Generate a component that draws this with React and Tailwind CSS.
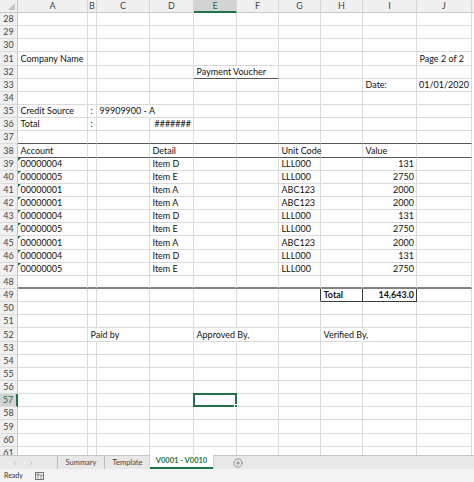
import { ChevronLeft, ChevronRight, CirclePlus } from "lucide-react";

// Sheet layout ---------------------------------------------------------

const COLS = ["A", "B", "C", "D", "E", "F", "G", "H", "I", "J"];
const ROWS = Array.from({ length: 34 }, (_, i) => 28 + i);

const items = [
  ["00000004", "Item D", "LLL000", "131"],
  ["00000005", "Item E", "LLL000", "2750"],
  ["00000001", "Item A", "ABC123", "2000"],
  ["00000001", "Item A", "ABC123", "2000"],
  ["00000004", "Item D", "LLL000", "131"],
  ["00000005", "Item E", "LLL000", "2750"],
  ["00000001", "Item A", "ABC123", "2000"],
  ["00000004", "Item D", "LLL000", "131"],
  ["00000005", "Item E", "LLL000", "2750"],
];

const sheet = {
  31: { A: "Company Name", J: "Page 2 of 2" },
  32: { E: "Payment Voucher" },
  33: { I: "Date:", J: { t: "01/01/2020", r: true } },
  35: { A: "Credit Source", B: ":", C: "99909900 - A" },
  36: { A: "Total", B: ":", D: { t: "#######", r: true } },
  38: { A: "Account", D: "Detail", G: "Unit Code", I: "Value" },
  49: { H: { t: "Total", b: true }, I: { t: "14,643.0", b: true, r: true } },
  52: { B: "Paid by", E: "Approved By,", H: "Verified By," },
};
items.forEach(([acc, detail, unit, value], i) => {
  sheet[39 + i] = { A: { t: acc, flag: true }, D: detail, G: unit, I: { t: value, r: true } };
});

// cells whose text runs over into the next cell: no gridline on the right
const overflow = ["32E", "35C", "52B", "52E", "52H"];

function rightBorder(row, col) {
  if (overflow.includes(row + col)) return "border-r border-r-transparent";
  if (row === 49 && (col === "G" || col === "H" || col === "I")) return "border-r border-r-[#3a3a3a]";
  return "border-r border-r-[#dadada]";
}

function bottomBorder(row, col) {
  if (row === 37 || row === 38) return "border-b border-b-[#555555]";
  if (row === 48) return "border-b-2 border-b-[#808080]";
  if (row === 32 && (col === "E" || col === "F")) return "border-b border-b-[#555555]";
  if (row === 49 && (col === "H" || col === "I")) return "border-b border-b-[#3a3a3a]";
  return "border-b border-b-[#dadada]";
}

function Cell({ row, col }) {
  const raw = sheet[row]?.[col];
  const v = typeof raw === "string" ? { t: raw } : raw;
  const selected = row === 57 && col === "E";
  return (
    <div
      className={`relative h-[13.15px] flex items-end whitespace-nowrap ${rightBorder(row, col)} ${bottomBorder(row, col)}`}
    >
      {v && (
        <span
          className={`relative z-10 block w-full leading-[10px] pb-[1px] text-[#111] ${v.r ? "text-right pr-[2px]" : "pl-[2.5px]"} ${v.b ? "font-bold" : ""}`}
        >
          {v.t}
        </span>
      )}
      {v?.flag && (
        <span className="absolute left-0 top-0 w-0 h-0 border-t-[3px] border-r-[3px] border-t-[#1e7145] border-r-transparent" />
      )}
      {selected && (
        <span className="absolute z-20 -left-px -top-px -right-px -bottom-px border-2 border-[#217346]">
          <span className="absolute -right-[3px] -bottom-[3px] w-[4px] h-[4px] bg-[#217346] border border-white" />
        </span>
      )}
    </div>
  );
}

function RowHeader({ row }) {
  const active = row === 57;
  return (
    <div
      className={`h-[13.15px] flex items-end justify-center border-b border-b-[#dcdcdc] ${
        active
          ? "bg-[#d3d3d3] text-[#217346] border-r-2 border-r-[#217346]"
          : "bg-[#f0f0f0] text-[#444] border-r border-r-[#c8c8c8]"
      }`}
    >
      <span className="leading-[10px] pb-[1px] text-[9px]">{row}</span>
    </div>
  );
}

function ColHeader({ col }) {
  const active = col === "E";
  return (
    <div
      className={`h-[13px] flex items-center justify-center text-[9px] border-r border-r-[#d4d4d4] ${
        active
          ? "bg-[#d3d3d3] text-[#217346] border-b-2 border-b-[#217346]"
          : "bg-[#f0f0f0] text-[#444] border-b border-b-[#c8c8c8]"
      }`}
    >
      {col}
    </div>
  );
}

export default function App() {
  return (
    <div
      className="w-[474px] h-[482px] flex flex-col overflow-hidden bg-white select-none"
      style={{ fontFamily: "Lato, 'Liberation Sans', sans-serif" }}
    >
      {/* Grid */}
      <div className="h-[455px] overflow-hidden bg-white text-[9px]">
        <div className="grid grid-cols-[18px_70px_9px_53px_44px_43px_42px_42px_42px_54px_55px_2px]">
          {/* header row */}
          <div className="relative h-[13px] bg-[#f0f0f0] border-r border-r-[#c8c8c8] border-b border-b-[#c8c8c8]">
            <span className="absolute right-[2px] bottom-[2px] w-0 h-0 border-b-[7px] border-l-[7px] border-b-[#c4c4c4] border-l-transparent" />
          </div>
          {COLS.map((c) => (
            <ColHeader key={c} col={c} />
          ))}
          <div className="h-[13px] bg-[#f0f0f0] border-b border-b-[#c8c8c8]" />

          {ROWS.map((r) => [
            <RowHeader key={`h${r}`} row={r} />,
            ...COLS.map((c) => <Cell key={`${r}${c}`} row={r} col={c} />),
            <div key={`e${r}`} className="h-[13.15px]" />,
          ])}
        </div>
      </div>

      {/* Sheet tabs */}
      <div className="h-[14px] flex items-stretch bg-[#e8e8e8] border-t border-t-[#c6c6c6] text-[7.5px] text-[#444]">
        <div className="w-[57px] flex items-center pl-[11px] gap-[8px] text-[#b5b5b5]">
          <ChevronLeft size={8} strokeWidth={2} />
          <ChevronRight size={8} strokeWidth={2} />
        </div>
        <div className="w-[47px] flex items-center justify-center border-l border-l-[#bdbdbd]">Summary</div>
        <div className="w-[46px] flex items-center justify-center border-l border-l-[#bdbdbd]">Template</div>
        <div className="w-[63px] -mt-px flex items-center justify-center bg-white font-bold text-[#217346] border-b-2 border-b-[#217346] shadow-[0_1px_2px_rgba(0,0,0,0.25)]">
          V0001 - V0010
        </div>
        <div className="flex items-center pl-[20px] text-[#666]">
          <CirclePlus size={10} strokeWidth={1.5} />
        </div>
      </div>

      {/* Status bar */}
      <div className="flex-1 flex items-center bg-[#f3f3f3] text-[7px] text-[#333] pl-[4px]">
        <span>Ready</span>
        <svg width="9" height="8" viewBox="0 0 9 8" className="ml-[12px]" fill="none" stroke="#777" strokeWidth="1">
          <rect x="0.5" y="0.5" width="8" height="7" />
          <path d="M0.5 3H8.5M3 0.5V7.5M6 3V7.5" strokeWidth="0.8" />
        </svg>
      </div>
    </div>
  );
}
